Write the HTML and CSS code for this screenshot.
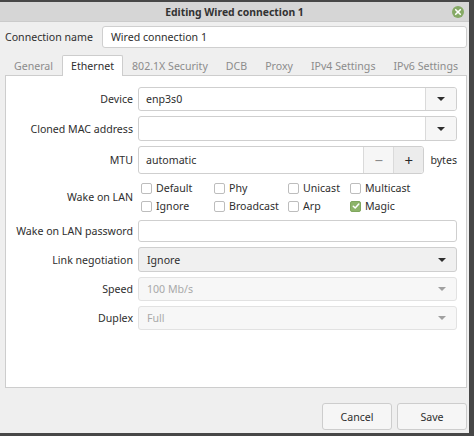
FILE: index.html
```html
<!DOCTYPE html>
<html>
<head>
<meta charset="utf-8">
<link rel="stylesheet" href="styles.css">
</head>
<body>
<div class="window">
  <div class="titlebar">
    <span></span>
    <span class="title">Editing Wired connection 1</span>
    <span class="close">
      <svg width="12" height="12" viewBox="0 0 12 12">
        <circle cx="6" cy="6" r="6" fill="#86aa66"/>
        <path d="M3.7 3.7 L8.3 8.3 M8.3 3.7 L3.7 8.3" stroke="#fff" stroke-width="1.6" stroke-linecap="round"/>
      </svg>
    </span>
  </div>
  <div class="content">
    <div class="conn-row">
      <span class="conn-label">Connection name</span>
      <div class="entry conn-entry">Wired connection 1</div>
    </div>
    <div class="tabs">
      <span class="tab">General</span>
      <span class="tab active">Ethernet</span>
      <span class="tab">802.1X Security</span>
      <span class="tab">DCB</span>
      <span class="tab">Proxy</span>
      <span class="tab">IPv4 Settings</span>
      <span class="tab">IPv6 Settings</span>
    </div>
    <div class="panel">
      <div class="form">
        <span class="label">Device</span>
        <div class="combo-entry h24">
          <span class="combo-text">enp3s0</span>
          <span class="combo-btn"><span class="arrow"></span></span>
        </div>

        <span class="label">Cloned MAC address</span>
        <div class="combo-entry h25">
          <span class="combo-text"></span>
          <span class="combo-btn"><span class="arrow"></span></span>
        </div>

        <span class="label">MTU</span>
        <div class="spin-row">
          <div class="spin">
            <span class="spin-text">automatic</span>
            <span class="spin-btn minus">&minus;</span>
            <span class="spin-btn plus">+</span>
          </div>
          <span class="unit">bytes</span>
        </div>

        <span class="label">Wake on LAN</span>
        <div class="checks">
          <span class="check"><span class="box"></span>Default</span>
          <span class="check"><span class="box"></span>Phy</span>
          <span class="check"><span class="box"></span>Unicast</span>
          <span class="check"><span class="box"></span>Multicast</span>
          <span class="check"><span class="box"></span>Ignore</span>
          <span class="check"><span class="box"></span>Broadcast</span>
          <span class="check"><span class="box"></span>Arp</span>
          <span class="check"><span class="box checked"><svg width="8" height="8" viewBox="0 0 8 8"><path d="M1.3 4.2 L3.2 6 L6.8 2" fill="none" stroke="#fff" stroke-width="1.5" stroke-linecap="round" stroke-linejoin="round"/></svg></span>Magic</span>
        </div>

        <span class="label">Wake on LAN password</span>
        <div class="entry h22"></div>

        <span class="label">Link negotiation</span>
        <div class="dropdown h25">
          <span>Ignore</span>
          <span class="arrow"></span>
        </div>

        <span class="label">Speed</span>
        <div class="dropdown disabled h24">
          <span>100 Mb/s</span>
          <span class="arrow"></span>
        </div>

        <span class="label">Duplex</span>
        <div class="dropdown disabled h24">
          <span>Full</span>
          <span class="arrow"></span>
        </div>
      </div>
    </div>
    <div class="actions">
      <span class="button">Cancel</span>
      <span class="button">Save</span>
    </div>
  </div>
</div>
</body>
</html>
```
FILE: styles.css
```css
* { box-sizing: border-box; }

body {
  margin: 0;
  background: #474747;
  font-family: "Noto Sans", "DejaVu Sans", sans-serif;
  font-size: 10.6px;
  color: #2e2e2e;
}

.window {
  width: 469px;
  height: 431px;
  margin-top: 2px;
  background: #efefef;
  display: flex;
  flex-direction: column;
}

.titlebar {
  height: 20px;
  background: #d6d6d6;
  border-bottom: 1px solid #cbcbcb;
  display: grid;
  grid-template-columns: 1fr auto 1fr;
  align-items: center;
}

.title {
  font-weight: bold;
  font-size: 10.4px;
  color: #333;
}

.close {
  justify-self: end;
  margin-right: 5px;
  display: flex;
}

.content {
  flex: 1;
  display: flex;
  flex-direction: column;
  padding: 4px 2px 0 5px;
}

.conn-row {
  display: grid;
  grid-template-columns: 97px 1fr;
  align-items: center;
}

.conn-label { color: #2e2e2e; }

.entry {
  background: #fff;
  border: 1px solid #cfcfcf;
  border-radius: 3px;
  padding: 0 8px;
  display: flex;
  align-items: center;
}

.conn-entry { height: 22px; }

.tabs {
  display: flex;
  height: 21px;
  margin-top: 7px;
  margin-bottom: -1px;
  position: relative;
  z-index: 1;
}

.tab {
  padding: 1px 9px 0;
  line-height: 20px;
  color: #8c8c8c;
}

.tab.active {
  background: #fff;
  border: 1px solid #cdcdcd;
  border-bottom: none;
  border-radius: 2px 2px 0 0;
  padding: 0 8px;
  line-height: 20px;
  color: #2e2e2e;
  height: 21px;
}

.panel {
  height: 313px;
  background: #fff;
  border: 1px solid #cdcdcd;
}

.form {
  display: grid;
  grid-template-columns: 127px 1fr;
  column-gap: 5px;
  row-gap: 5px;
  padding: 11px 9px 0 0;
}

.label {
  text-align: right;
  align-self: center;
  white-space: nowrap;
}

.h22 { height: 22px; }
.h23 { height: 23px; }
.h24 { height: 24px; }
.h25 { height: 25px; }

.combo-entry {
  display: flex;
  border: 1px solid #cfcfcf;
  border-radius: 3px;
  background: #fff;
}

.combo-text {
  flex: 1;
  padding-left: 7px;
  display: flex;
  align-items: center;
}

.combo-btn {
  width: 31px;
  border-left: 1px solid #dadada;
  background: #f6f6f6;
  border-radius: 0 3px 3px 0;
  display: flex;
  align-items: center;
  justify-content: center;
}

.arrow {
  width: 0;
  height: 0;
  border-left: 4px solid transparent;
  border-right: 4px solid transparent;
  border-top: 4px solid #2e2e2e;
}

.spin-row {
  display: flex;
  align-items: center;
  height: 28px;
  gap: 6px;
}

.spin {
  flex: 1;
  display: flex;
  height: 28px;
  border: 1px solid #cfcfcf;
  border-radius: 3px;
  background: #fff;
}

.spin-text {
  flex: 1;
  padding-left: 7px;
  display: flex;
  align-items: center;
}

.spin-btn {
  width: 30px;
  display: flex;
  align-items: center;
  justify-content: center;
  border-left: 1px solid #dadada;
  font-size: 15px;
}

.spin-btn.minus {
  background: #f6f6f6;
  color: #8a8a8a;
}

.spin-btn.plus {
  background: #ececec;
  color: #2a2a2a;
  border-radius: 0 3px 3px 0;
}

.unit { color: #2e2e2e; }

.checks {
  display: grid;
  grid-template-columns: 73px 74px 62px auto;
  grid-auto-rows: 18px;
  padding-left: 3px;
  height: 36px;
}

.check {
  display: flex;
  align-items: center;
  gap: 4px;
}

.box {
  width: 11px;
  height: 11px;
  border: 1px solid #bdbdbd;
  border-radius: 2px;
  background: #fff;
  display: flex;
  align-items: center;
  justify-content: center;
}

.box.checked {
  background: #8db46a;
  border-color: #80a75e;
}

.dropdown {
  display: flex;
  align-items: center;
  justify-content: space-between;
  padding: 0 10px 0 8px;
  border: 1px solid #cfcfcf;
  border-radius: 3px;
  background: #f0f0f0;
}

.dropdown.disabled {
  background: #f7f7f7;
  border-color: #e2e2e2;
  color: #a9a9a9;
}

.dropdown.disabled .arrow {
  border-top-color: #a0a0a0;
}

.actions {
  display: flex;
  justify-content: flex-end;
  gap: 5px;
  padding-top: 15px;
}

.button {
  width: 70px;
  height: 27px;
  border: 1px solid #cdcdcd;
  border-radius: 3px;
  background: #f6f6f6;
  display: flex;
  align-items: center;
  justify-content: center;
  color: #2e2e2e;
}
```
